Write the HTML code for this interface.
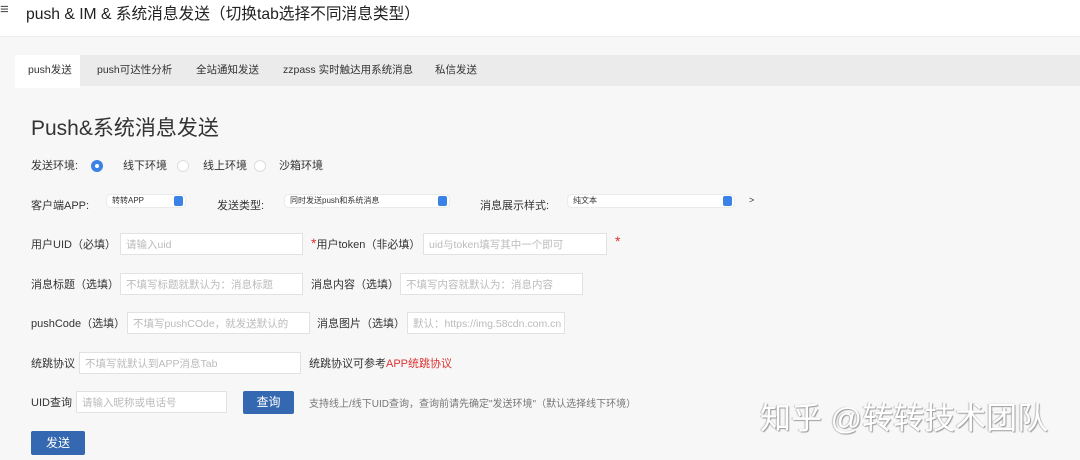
<!DOCTYPE html>
<html><head><meta charset="utf-8"><style>
body{margin:0;width:1080px;height:460px;background:#f7f7f7;font-family:"Liberation Sans","Noto Sans CJK SC",sans-serif;color:#333;position:relative;overflow:hidden;font-size:11px}
.a{position:absolute;white-space:nowrap}
.hdr{position:absolute;left:0;top:0;width:1080px;height:36px;background:#fff;border-bottom:1px solid #eee}
.tabs{position:absolute;left:15px;top:55px;width:1065px;height:31px;background:#ebebeb}
.inp{position:absolute;height:22px;background:#fff;border:1px solid #e2e2e2;color:#bbb;font-size:10.5px;line-height:22px;padding-left:5px;box-sizing:border-box;white-space:nowrap;overflow:hidden}
.sel{position:absolute;height:12px;background:#fff;border-radius:3px;box-shadow:0 0 1px #aaa;font-size:8px;line-height:12px;padding-left:5px;box-sizing:border-box;color:#333}
.sel i{position:absolute;right:2px;top:1px;width:9px;height:10px;border-radius:2px;background:#3b82e6}
.btn{position:absolute;background:#3468b0;color:#fff;font-size:12px;text-align:center;border-radius:2px}
.radio{position:absolute;width:12px;height:12px;border-radius:50%;background:#fff;border:1px solid #ddd;box-sizing:border-box}
</style></head><body>
<div class="hdr"></div>
<div class="a" style="left:0;top:1px;font-size:15px;color:#555">≡</div>
<div class="a" style="left:26px;top:1px;font-size:15.7px;color:#222">push &amp; IM &amp; 系统消息发送（切换tab选择不同消息类型）</div>
<div class="tabs"></div>
<div class="a" style="left:15px;top:55px;width:65px;height:33px;background:#fff"></div>
<div class="a" style="left:28px;top:62px;font-size:10.5px">push发送</div>
<div class="a" style="left:97px;top:62px;font-size:10.5px">push可达性分析</div>
<div class="a" style="left:196px;top:62px;font-size:10.5px">全站通知发送</div>
<div class="a" style="left:283px;top:62px;font-size:10.5px">zzpass 实时触达用系统消息</div>
<div class="a" style="left:435px;top:62px;font-size:10.5px">私信发送</div>
<div class="a" style="left:31px;top:112px;font-size:21px;color:#333">Push&amp;系统消息发送</div>
<div class="a" style="left:31px;top:157px">发送环境:</div>
<div class="radio" style="left:91px;top:160px;background:#3b82e6;border:none"></div>
<div class="a" style="left:95px;top:164px;width:4px;height:4px;background:#fff;border-radius:50%"></div>
<div class="a" style="left:123px;top:157px">线下环境</div>
<div class="radio" style="left:177px;top:160px"></div>
<div class="a" style="left:203px;top:157px">线上环境</div>
<div class="radio" style="left:254px;top:160px"></div>
<div class="a" style="left:279px;top:157px">沙箱环境</div>
<div class="a" style="left:31px;top:197px">客户端APP:</div>
<div class="sel" style="left:107px;top:195px;width:78px">转转APP<i></i></div>
<div class="a" style="left:217px;top:197px">发送类型:</div>
<div class="sel" style="left:285px;top:195px;width:164px">同时发送push和系统消息<i></i></div>
<div class="a" style="left:480px;top:197px">消息展示样式:</div>
<div class="sel" style="left:568px;top:195px;width:166px">纯文本<i></i></div>
<div class="a" style="left:749px;top:195px;font-size:9px">&gt;</div>
<div class="a" style="left:31px;top:236px">用户UID（必填）</div>
<div class="inp" style="left:120px;top:233px;width:183px">请输入uid</div>
<div class="a" style="left:311px;top:235px"><span style="color:#d33;font-size:14px">*</span>用户token（非必填）</div>
<div class="inp" style="left:423px;top:233px;width:184px">uid与token填写其中一个即可</div>
<div class="a" style="left:615px;top:233px;color:#d33;font-size:14px">*</div>
<div class="a" style="left:31px;top:276px">消息标题（选填）</div>
<div class="inp" style="left:120px;top:273px;width:183px">不填写标题就默认为：消息标题</div>
<div class="a" style="left:311px;top:276px">消息内容（选填）</div>
<div class="inp" style="left:400px;top:273px;width:183px">不填写内容就默认为：消息内容</div>
<div class="a" style="left:31px;top:315px">pushCode（选填）</div>
<div class="inp" style="left:127px;top:312px;width:183px">不填写pushCOde，就发送默认的</div>
<div class="a" style="left:317px;top:315px">消息图片（选填）</div>
<div class="inp" style="left:407px;top:312px;width:158px">默认：https://img.58cdn.com.cn</div>
<div class="a" style="left:31px;top:355px">统跳协议</div>
<div class="inp" style="left:79px;top:352px;width:222px">不填写就默认到APP消息Tab</div>
<div class="a" style="left:309px;top:355px">统跳协议可参考<span style="color:#d33">APP统跳协议</span></div>
<div class="a" style="left:31px;top:394px">UID查询</div>
<div class="inp" style="left:76px;top:391px;width:151px">请输入昵称或电话号</div>
<div class="btn" style="left:243px;top:391px;width:51px;height:23px;line-height:23px">查询</div>
<div class="a" style="left:309px;top:395px;color:#777;font-size:10px">支持线上/线下UID查询，查询前请先确定"发送环境"（默认选择线下环境）</div>
<div class="btn" style="left:31px;top:431px;width:54px;height:24px;line-height:24px">发送</div>
<div class="a" style="left:760px;top:393px;font-size:31px;color:#fff;text-shadow:1px 1px 1px #999,-1px 0 1px #bbb">知乎 @转转技术团队</div>
</body></html>
